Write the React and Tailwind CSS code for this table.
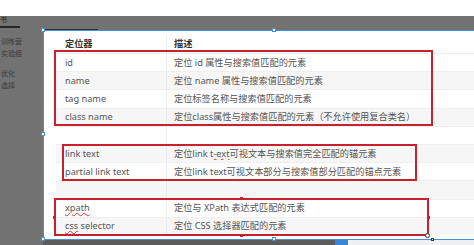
import React from 'react';

const wavy = 'underline decoration-wavy decoration-[#e03030] decoration-1';

const rows = [
  { name: 'id', desc: <>定位 id 属性与搜索值匹配的元素</> },
  { name: 'name', desc: <>定位 name 属性与搜索值匹配的元素</> },
  { name: 'tag name', desc: <>定位标签名称与搜索值匹配的元素</> },
  { name: 'class name', desc: <>定位class属性与搜索值匹配的元素（不允许使用复合类名）</> },
  { name: '', desc: '' },
  {
    name: 'link text',
    desc: (
      <>
        定位link <span className={wavy}>t-ext</span>可视文本与搜索值完全匹配的锚元素
      </>
    ),
  },
  { name: 'partial link text', desc: <>定位link text可视文本部分与搜索值部分匹配的锚点元素</> },
  { name: '', desc: '' },
  { name: <span className={wavy}>xpath</span>, desc: <>定位与 XPath 表达式匹配的元素</> },
  {
    name: (
      <>
        <span className={wavy}>css</span> selector
      </>
    ),
    desc: <>定位 CSS 选择器匹配的元素</>,
  },
];

const Handle = ({ className }) => (
  <div className={'absolute w-[4px] h-[4px] bg-white border border-[#4a90d9] ' + className} />
);

const RedHandle = ({ className }) => (
  <div className={'absolute w-[3px] h-[3px] bg-[#c8202c] ' + className} />
);

const App = () => {
  return (
    <div
      className="relative w-[474px] h-[245px] overflow-hidden bg-white"
      style={{ fontFamily: '"Noto Sans", "Noto Sans CJK SC", sans-serif' }}
    >
      <div className="h-4 bg-white" />
      <div className="flex h-[229px]">
        {/* dimmed sidebar */}
        <aside className="w-[43px] bg-[#727272] text-[#3a3a3a] text-[7px] leading-none">
          <div className="h-[8px] text-[7px] leading-[8px] text-[#222]">书</div>
          <div className="mt-[2px] h-[2px] w-[20px] bg-[#262626]" />
          <div className="mt-[10px] pl-[1px]">训练营</div>
          <div className="mt-[5px] pl-[1px]">实验组</div>
          <div className="mt-[13px] pl-[1px]">优化</div>
          <div className="mt-[5px] pl-[1px]">选择</div>
        </aside>

        <div className="flex-1 flex flex-col bg-[#727272]">
          <div className="h-[14px]">
            <div className="inline-block mt-[6px] ml-[2px] px-[2px] h-[7px] bg-[#2e2e2e] text-[#d8d8d8] text-[5.5px] leading-[7px] font-mono tracking-[0.5px]">
              1154 x 607 px
            </div>
          </div>

          <div className="flex-1 bg-white border-t border-l border-b border-[#4a90d9] pt-1 pl-3 text-[9.2px] text-[#555]">
            <div className="grid grid-cols-[111px_1fr] h-[18px] items-center font-bold text-[#333]">
              <div className="pl-[9px] h-full flex items-center border-r border-[#ececec]">定位器</div>
              <div className="pl-[7px]">描述</div>
            </div>
            {rows.map((r, i) => (
              <div
                key={i}
                className={
                  'grid grid-cols-[111px_1fr] h-[18.2px] items-center border-t border-[#efefef] ' +
                  (i % 2 === 1 ? 'bg-[#f6f6f6]' : 'bg-white')
                }
              >
                <div className="pl-[9px] h-full flex items-center border-r border-[#ececec] whitespace-nowrap">
                  <span>{r.name}</span>
                </div>
                <div className="pl-[7px] whitespace-nowrap overflow-hidden">{r.desc}</div>
              </div>
            ))}
          </div>

          <div className="h-[5px] flex">
            <div className="w-[292px] bg-[#5c5c5c]" />
            <div className="w-[13px] bg-[#3a86d6]" />
            <div className="flex-1 bg-[#eef1f4]" />
          </div>
        </div>
      </div>

      {/* annotation boxes drawn over the table */}
      <div className="absolute left-[54px] top-[50px] w-[379px] h-[76px] border-2 border-[#c8202c]" />
      <div className="absolute left-[62px] top-[144px] w-[355px] h-[37px] border-2 border-[#c8202c]" />
      <div className="absolute left-[54px] top-[198px] w-[375px] h-[38px] border-2 border-[#c8202c]" />
      <RedHandle className="left-[240px] top-[197px]" />
      <RedHandle className="left-[240px] top-[234px]" />
      <RedHandle className="left-[53px] top-[216px]" />
      <RedHandle className="left-[427px] top-[216px]" />
      <div className="absolute left-[425px] top-[233px] w-[5px] h-[5px] rounded-full border border-[#333] bg-white" />
      <div className="absolute left-[431px] top-[238px] w-[3px] h-[3px] border border-[#333] bg-white" />

      {/* selection handles */}
      <Handle className="left-[41px] top-[28px]" />
      <Handle className="left-[272px] top-[28px]" />
      <Handle className="left-[41px] top-[132px]" />
      <Handle className="left-[41px] top-[237px]" />
      <Handle className="left-[272px] top-[237px]" />
    </div>
  );
};

export default App;
